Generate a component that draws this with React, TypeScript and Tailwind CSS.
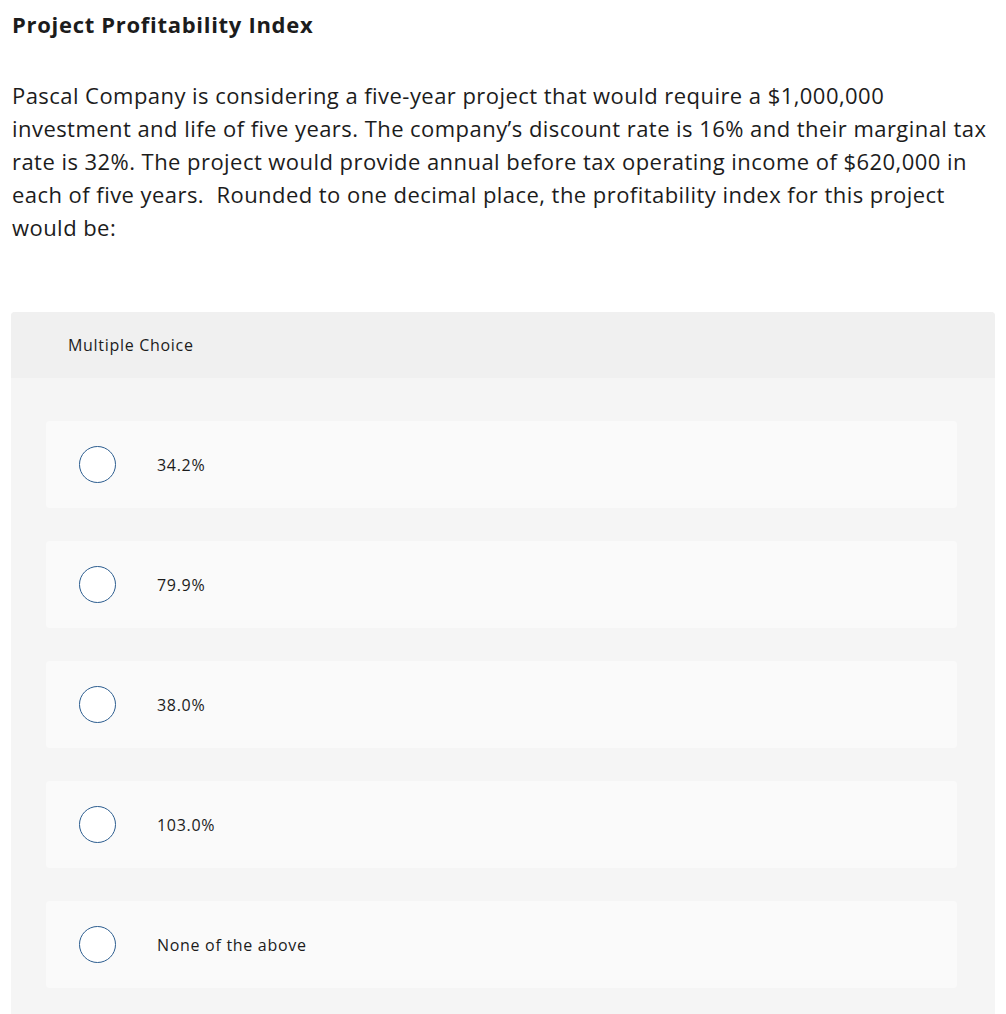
const options = ["34.2%", "79.9%", "38.0%", "103.0%", "None of the above"];

function Radio() {
  return <span className="block h-[37px] w-[37px] shrink-0 rounded-full border border-[#2c5d8f] bg-white" />;
}

export default function App() {
  return (
    <div className="min-h-screen bg-white font-['Open_Sans','Liberation_Sans',sans-serif] text-[#1c1c1c]">
      <div className="px-3 pt-[9px]">
        <h1 className="text-[22px] font-bold leading-[30px] tracking-[0.7px]">Project Profitability Index</h1>
        <p className="mt-[40px] whitespace-nowrap text-[22px] leading-[33px] tracking-[0.45px]">
          Pascal Company is considering a five-year project that would require a $1,000,000
          <br />
          investment and life of five years. The company’s discount rate is 16% and their marginal tax
          <br />
          rate is 32%. The project would provide annual before tax operating income of $620,000 in
          <br />
          each of five years.&nbsp; Rounded to one decimal place, the profitability index for this project
          <br />
          would be:
        </p>
      </div>

      <div className="mx-[11px] mt-[68px] overflow-hidden rounded-t-[4px] bg-[#f5f5f5]">
        <div className="flex h-[66px] items-center bg-[#f0f0f0] pl-[57px] text-[16px] tracking-[0.7px]">
          Multiple Choice
        </div>
        <div className="flex flex-col gap-[33px] pb-[26px] pl-[35px] pr-[38px] pt-[43px]">
          {options.map((o) => (
            <label key={o} className="flex h-[87px] items-center rounded-[4px] bg-[#fafafa] pl-[33px]">
              <Radio />
              <span className="ml-[41px] text-[16px] tracking-[0.7px]">{o}</span>
            </label>
          ))}
        </div>
      </div>
    </div>
  );
}
